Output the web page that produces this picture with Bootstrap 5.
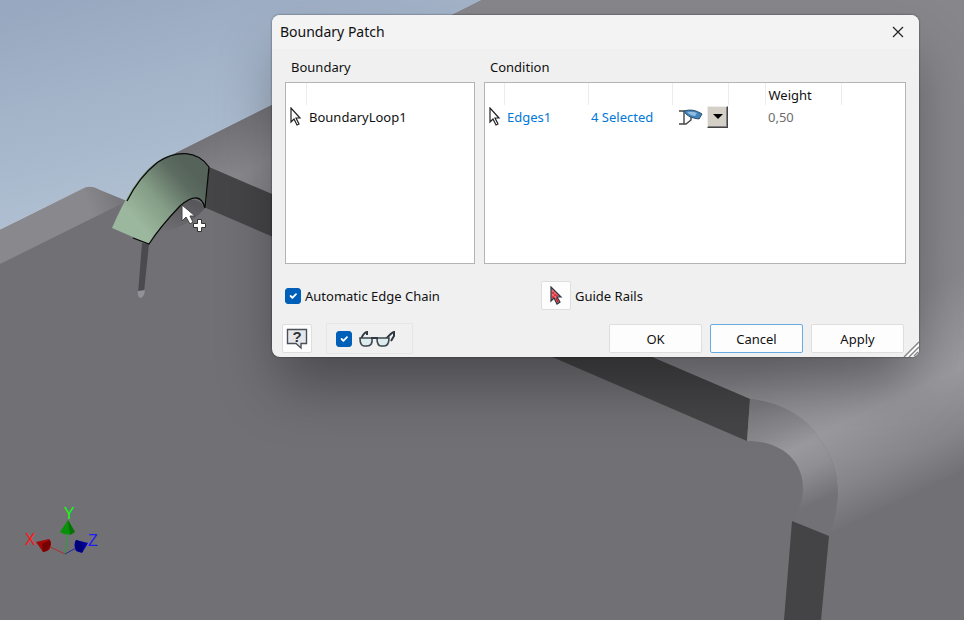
<!DOCTYPE html>
<html lang="en">
<head>
<meta charset="utf-8">
<meta name="viewport" content="width=device-width, initial-scale=1">
<title>Boundary Patch</title>
<link href="https://cdn.jsdelivr.net/npm/bootstrap@5.3.0/dist/css/bootstrap.min.css" rel="stylesheet">
<style>
body { font-family: "Noto Sans", "Open Sans", sans-serif; font-size: 13px; line-height: 20px; color: #111; background: #717075; }
.workspace { min-height: 100vh; }
.scene { inset: 0; width: 100%; height: 100%; }
.dialog-window { left: 272px; top: 15px; width: 647px; background: #f0f0f0; border-radius: 8px; box-shadow: 0 0 2px rgba(0,0,0,.6), 0 34px 58px -6px rgba(0,0,0,.34); }
.title-strip { height: 34px; padding: 0 14px 0 8px; background: #f3f3f3; border-radius: 8px 8px 0 0; }
.title-strip h1 { font-size: 14px; line-height: 20px; font-weight: 400; }
.close-x { width: 14px; height: 14px; }
.lists { padding: 8px 13px 0; gap: 9px; }
.list-boundary { width: 190px; }
.group-name { font-size: 13px; line-height: 20px; font-weight: 400; padding-left: 6px; margin-bottom: 5px; }
.list-frame { height: 182px; background: #fff; border: 1px solid #b4b4b8; }
.list-frame table { table-layout: fixed; }
.list-frame th { height: 22px; padding: 2px 0 0 3px; font-weight: 400; border-right: 1px solid #ececec; }
.list-frame th:last-child { border-right: 0; }
.list-frame td { height: 24px; padding: 0 0 0 3px; white-space: nowrap; }
.link-cell { color: #0078d7; text-decoration: none; }
.muted-cell { color: #6d6d6d; }
.drop-btn { width: 21px; height: 22px; background: #d4d0c8; border: 1px solid; border-color: #f0eee8 #444 #444 #f0eee8; box-shadow: inset -1px -1px 0 #808080; }
.options { padding: 17px 13px 0; }
.option-chain { width: 256px; }
.form-check-input.blue-check { width: 16px; height: 16px; border-radius: 3px; margin: 0; }
.form-check-input.blue-check:checked { background-color: #005fb8; border-color: #005fb8; background-size: 12px; }
.tool-btn { width: 30px; height: 29px; background: #fdfdfd; border: 1px solid #dedede; border-radius: 2px; }
.footer-row { padding: 13px 15px 3px 10px; }
.preview-box { width: 87px; height: 31px; padding-left: 9px; gap: 7px; border: 1px solid #e6e6e6; margin-left: 14px; }
.action-btn { width: 93px; height: 29px; padding: 0; border: 1px solid #dedede; border-radius: 2px; background: #fdfdfd; color: #111; font-size: 13px; line-height: 20px; }
.action-btn.is-default { border-color: #66ace2; }
.grip { right: 0; bottom: 0; }
</style>
<script src="https://cdn.jsdelivr.net/npm/bootstrap@5.3.0/dist/js/bootstrap.bundle.min.js"></script>
</head>
<body>
<main class="workspace position-relative overflow-hidden">
<svg class="scene position-absolute" viewBox="0 0 964 620" preserveAspectRatio="xMidYMid slice" role="img" aria-label="Model view">
  <defs>
    <linearGradient id="sky" gradientUnits="userSpaceOnUse" x1="60" y1="0" x2="110" y2="210"><stop offset="0" stop-color="#98a8c0"/><stop offset="1" stop-color="#b0c0d2"/></linearGradient>
    <linearGradient id="side" gradientUnits="userSpaceOnUse" x1="255" y1="543" x2="357" y2="759"><stop offset="0" stop-color="#87868b"/><stop offset=".24" stop-color="#88878c"/><stop offset=".6" stop-color="#9b9a9f"/><stop offset=".84" stop-color="#858489"/><stop offset="1" stop-color="#717075"/></linearGradient>
    <linearGradient id="roll" gradientUnits="userSpaceOnUse" x1="220" y1="132" x2="255" y2="202"><stop offset="0" stop-color="#747378"/><stop offset=".6" stop-color="#89888d"/><stop offset="1" stop-color="#858489"/></linearGradient>
    <linearGradient id="corner" gradientUnits="userSpaceOnUse" x1="768" y1="400" x2="818" y2="512"><stop offset="0" stop-color="#7c7b80"/><stop offset=".25" stop-color="#89888d"/><stop offset=".45" stop-color="#9a999e"/><stop offset=".65" stop-color="#8f8e93"/><stop offset=".93" stop-color="#727176"/></linearGradient>
    <linearGradient id="patch" gradientUnits="userSpaceOnUse" x1="140" y1="225" x2="196" y2="176"><stop offset="0" stop-color="#9bb79d"/><stop offset=".4" stop-color="#849d86"/><stop offset=".8" stop-color="#5d6c61"/><stop offset="1" stop-color="#55635a"/></linearGradient>
    <linearGradient id="ledge" gradientUnits="userSpaceOnUse" x1="88" y1="205" x2="118" y2="192"><stop offset="0" stop-color="#89888c"/><stop offset="1" stop-color="#77767b"/></linearGradient>
    <linearGradient id="under" gradientUnits="userSpaceOnUse" x1="186" y1="200" x2="172" y2="236"><stop offset="0" stop-color="#58575b"/><stop offset="1" stop-color="#717075"/></linearGradient>
  </defs>
  <rect width="964" height="620" fill="#717075"/>
  <path d="M0 0H482L272 105L172 155L127 202L100 191Q90 184 82 190L0 230Z" fill="url(#sky)"/>
  <path d="M0 230L82 189Q90 184 100 190L127 201L0 264Z" fill="url(#ledge)"/>
  <path d="M482 0H964V469L829 534C843 500 840 465 820 440C811 422 786 403 750 399L209 167L172 155L272 105Z" fill="url(#side)"/>
  <path d="M170 156L290 96V203L209 167Z" fill="url(#roll)"/>
  <path d="M209 167L750 399L747 441L206 208Z" fill="#454446"/>
  <path d="M747 441L750 399C786 403 811 422 820 440C840 465 843 500 829 536L792 521C798 512 803 503 803 488C803 462 783 441 747 441Z" fill="url(#corner)"/>
  <path d="M792 521L829 536L821 620H784Z" fill="#444345"/>
  <path d="M142 243L149 244L144 292L138 294Z" fill="#4b4a4d"/><path d="M138 291L145 290Q144 298 140 298Q137 296 138 291Z" fill="#929197"/>
  <path d="M149 244L181 205Q196 193 205 208Q192 224 165 232Z" fill="url(#under)"/>
  <path d="M112 228Q132 181 154 164Q184 141 209 167L205 208Q199 187 176 210L149 244Z" fill="url(#patch)"/>
  <path d="M127 201Q139 177 158 162C176 150 197 150 209 167L205 208M133 238L149 244Q160 227 180 206Q200 189 205 208" fill="none" stroke="#090b09" stroke-width="1.3"/>
  <path d="M182 205V221L186 217L190 224L193 222L190 216H195Z" fill="#fff" stroke="#444" stroke-width="1"/>
  <path d="M197.500 219.500H201.500V223.500H205.500V227.500H201.500V231.500H197.500V227.500H193.500V223.500H197.500Z" fill="#fff" stroke="#333"/>
  <g fill="none" stroke-width="1"><path d="M65 554L48 546" stroke="#aa3030"/><path d="M65 554L68 534" stroke="#24a62c"/><path d="M65 554L78 547" stroke="#282a9b"/></g>
  <path d="M36 542L49 539Q53 543 49 550L43 552Z" fill="#a30808"/><path d="M42 544L50 540Q52 545 47 551L43 552Z" fill="#760202"/>
  <path d="M68 520L75 532Q68 537 60 532Z" fill="#079207"/><path d="M68 520L75 532L70 535Z" fill="#077007"/>
  <path d="M88 543L76 540Q73 544 76 551L82 553Z" fill="#0000a2"/><path d="M76 540L82 542L83 552L77 551Q74 545 76 540Z" fill="#000077"/>
  <g font-family="Liberation Sans, sans-serif" font-size="16" text-anchor="middle"><text x="30" y="545" fill="#ff1515">X</text><text x="69" y="519" fill="#0eff0e">Y</text><text x="93" y="546" fill="#1d1df4">Z</text></g>
</svg>

<section class="dialog-window position-absolute" role="dialog" aria-labelledby="dialog-title">
  <header class="title-strip d-flex align-items-center justify-content-between">
    <h1 id="dialog-title" class="m-0">Boundary Patch</h1>
    <button type="button" class="close-x btn p-0 border-0 d-flex" aria-label="Close"><svg width="14" height="14" viewBox="0 0 14 14"><path d="M2 2L12 12M12 2L2 12" stroke="#222" stroke-width="1.2"/></svg></button>
  </header>
  <div class="lists d-flex">
    <div class="list-boundary flex-shrink-0">
      <h2 class="group-name">Boundary</h2>
      <div class="list-frame">
        <table class="w-100" aria-label="Boundary">
          <colgroup><col style="width:20px"><col></colgroup>
          <thead><tr><th></th><th></th></tr></thead>
          <tbody><tr><td><svg class="d-block" width="14" height="20" viewBox="0 0 14 20"><path d="M2 1V15L5 12L8 18L10 17L7 11H11Z" fill="#fff" stroke="#222" stroke-width="1.2"/></svg></td><td>BoundaryLoop1</td></tr></tbody>
        </table>
      </div>
    </div>
    <div class="flex-grow-1">
      <h2 class="group-name">Condition</h2>
      <div class="list-frame">
        <table class="w-100" aria-label="Condition">
          <colgroup><col style="width:19px"><col style="width:84px"><col style="width:84px"><col style="width:56px"><col style="width:37px"><col style="width:76px"><col></colgroup>
          <thead><tr><th></th><th></th><th></th><th></th><th></th><th>Weight</th><th></th></tr></thead>
          <tbody><tr>
            <td><svg class="d-block" width="14" height="20" viewBox="0 0 14 20"><path d="M2 1V15L5 12L8 18L10 17L7 11H11Z" fill="#fff" stroke="#222" stroke-width="1.2"/></svg></td>
            <td><a href="#" class="link-cell">Edges1</a></td>
            <td><a href="#" class="link-cell">4 Selected</a></td>
            <td><div class="d-flex align-items-center gap-1 ps-1">
              <svg width="24" height="20" viewBox="0 0 24 20"><path d="M0 4H7M5 4V17M0 17H7L12 13V10" fill="none" stroke="#444" stroke-width="1.4"/><path d="M5 4Q14 1 23 7L20 12Q11 11 7 7Z" fill="#4383bd" stroke="#29506f"/><path d="M8 5Q14 4 18 6L16 9Q12 9 8 5Z" fill="#92bde1"/></svg>
              <button type="button" class="drop-btn p-0 d-flex align-items-center justify-content-center" aria-label="Condition type"><svg width="10" height="6" viewBox="0 0 10 6"><path d="M0 0H10L5 5Z" fill="#000"/></svg></button>
            </div></td>
            <td></td><td class="muted-cell">0,50</td><td></td>
          </tr></tbody>
        </table>
      </div>
    </div>
  </div>
  <div class="options d-flex align-items-center">
    <div class="option-chain d-flex align-items-center gap-1">
      <input class="form-check-input blue-check" type="checkbox" id="chain" checked><label for="chain">Automatic Edge Chain</label>
    </div>
    <div class="d-flex align-items-center gap-1">
      <button type="button" id="rails" class="tool-btn p-0 d-flex align-items-center justify-content-center" aria-labelledby="rails-name"><svg width="14" height="20" viewBox="0 0 14 20"><path d="M2 1V15L5 12L8 18L11 16L8 11H12Z" fill="#f16b72" stroke="#293943" stroke-width="1.2"/><path d="M4 6V8M4 10V12M6 8V10M8 9V10M7 12L9 16" stroke="#d4141f" stroke-width="1.2"/></svg></button>
      <span id="rails-name">Guide Rails</span>
    </div>
  </div>
  <footer class="footer-row d-flex align-items-center">
    <button type="button" class="tool-btn p-0 d-flex align-items-center justify-content-center" aria-label="Help"><svg width="22" height="22" viewBox="0 0 22 22"><path d="M1.500 1.500H20.500V15.500H15V20L10 15.500H1.500Z" fill="#e6e7eb" stroke="#4b5159" stroke-width="1.4"/><text x="11" y="14" text-anchor="middle" font-family="Liberation Sans, sans-serif" font-weight="700" font-size="15" fill="#303238">?</text></svg></button>
    <div class="preview-box d-flex align-items-center">
      <input class="form-check-input blue-check" type="checkbox" id="preview" aria-label="Preview" checked>
      <label for="preview" class="d-flex"><svg width="37" height="18" viewBox="0 0 37 18"><path d="M2 9Q5 2 8 2V5M27 9Q33 2 35 2V6L32 11" fill="none" stroke="#30383f" stroke-width="2"/><path d="M1 8H13Q14 16 8 16H5Q1 16 1 8ZM18 8H30Q30 16 25 16H22Q18 16 18 8Z" fill="#dcecef" stroke="#3e474e" stroke-width="1.6"/><path d="M12 8H19" stroke="#30383f" stroke-width="2"/></svg></label>
    </div>
    <div class="d-flex gap-2 ms-auto">
      <button type="button" class="btn action-btn">OK</button>
      <button type="button" class="btn action-btn is-default">Cancel</button>
      <button type="button" class="btn action-btn">Apply</button>
    </div>
  </footer>
  <svg class="grip position-absolute" width="16" height="16" viewBox="0 0 16 16"><path d="M1 16L16 1V8Q16 16 8 16Z" fill="#fff"/><path d="M1 16L16 1M6 16L16 6M11 15L15 11" stroke="#888" stroke-width="1.5"/></svg>
</section>
</main>
</body>
</html>
